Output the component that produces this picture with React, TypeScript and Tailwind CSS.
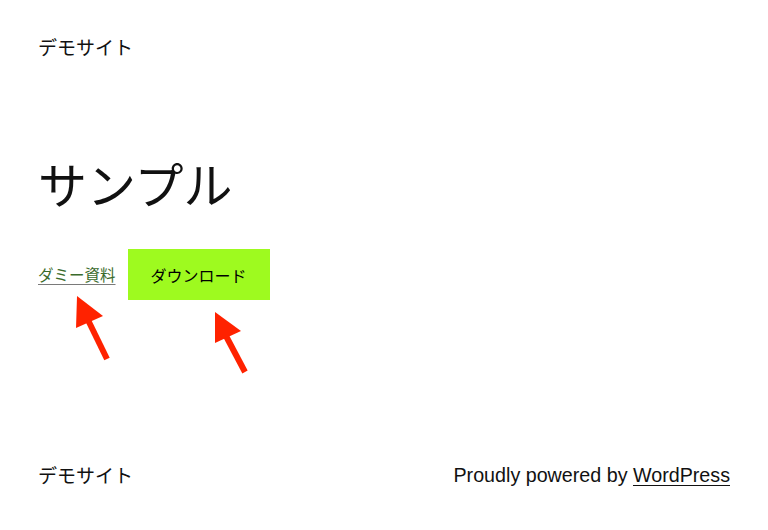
export default function App() {
  return (
    <div
      className="relative h-[530px] w-[768px] bg-white text-[#111] flex flex-col px-[38px]"
      style={{ fontFamily: '"Liberation Sans", "Noto Sans CJK JP", sans-serif' }}
    >
      {/* Header */}
      <header className="pt-[34px]">
        <p className="text-[19px] leading-[26px]" style={{ fontFamily: '"Noto Sans CJK JP", sans-serif' }}>
          デモサイト
        </p>
      </header>

      {/* Main */}
      <main className="mt-[91px] flex-1" style={{ fontFamily: '"Noto Sans CJK JP", sans-serif' }}>
        <h1 className="text-[49px] leading-[64px] font-normal">サンプル</h1>
        <div className="mt-[34px] flex items-center gap-3">
          <a href="#" className="text-[15.5px] text-[#3a6b2c] underline decoration-[#7a7a7a] underline-offset-[3px]">
            ダミー資料
          </a>
          <button className="h-[51px] px-[23px] bg-[#9efa1f] text-[16px] text-black">
            ダウンロード
          </button>
        </div>
      </main>

      {/* Footer */}
      <footer className="pb-[42px] flex items-center justify-between">
        <p className="text-[19px] leading-[26px]" style={{ fontFamily: '"Noto Sans CJK JP", sans-serif' }}>
          デモサイト
        </p>
        <p className="text-[19.7px] leading-[26px] text-[#111]">
          Proudly powered by{' '}
          <a href="#" className="underline underline-offset-[3px]">WordPress</a>
        </p>
      </footer>

      {/* Annotation arrows */}
      <svg className="absolute inset-0 pointer-events-none" width="768" height="530" viewBox="0 0 768 530">
        <polygon points="77,296 76,328 103,316" fill="#ff2200" />
        <line x1="88" y1="320" x2="107" y2="359" stroke="#ff2200" strokeWidth="6" />
        <polygon points="215,312 215,343 241,331" fill="#ff2200" />
        <line x1="226" y1="336" x2="245" y2="372" stroke="#ff2200" strokeWidth="6" />
      </svg>
    </div>
  );
}
